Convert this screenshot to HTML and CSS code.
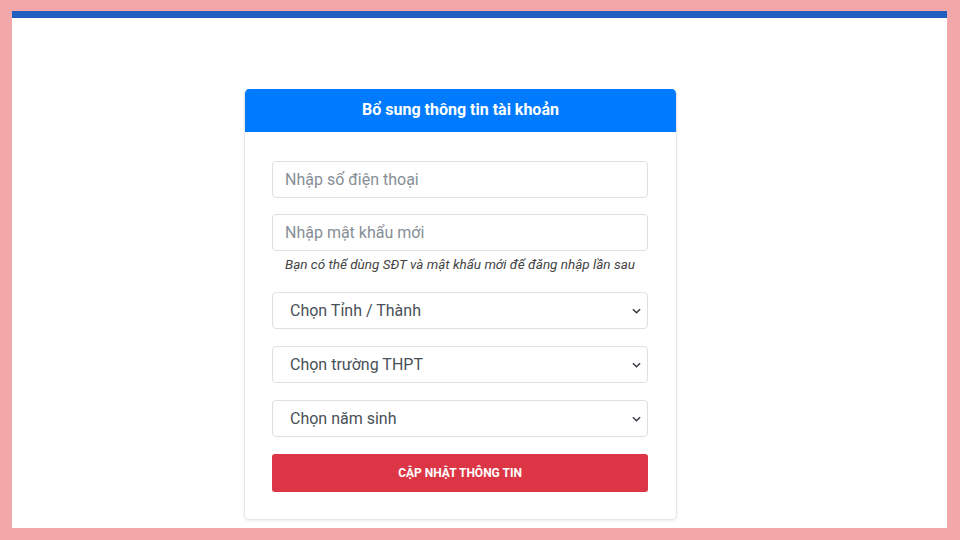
FILE: index.html
```html
<!DOCTYPE html>
<html lang="vi">
<head>
    <meta charset="UTF-8">
    <meta name="viewport" content="width=device-width, initial-scale=1.0">
    <title>Bổ sung thông tin tài khoản</title>
    <link rel="stylesheet" href="styles.css">
</head>
<body>
    <div class="frame">
        <div class="topbar"></div>

        <div class="page">
            <div class="card">
                <div class="card-header">Bổ sung thông tin tài khoản</div>

                <form class="card-body">
                    <div class="form-group">
                        <input type="text" class="form-control" placeholder="Nhập số điện thoại">
                    </div>

                    <div class="form-group">
                        <input type="password" class="form-control" placeholder="Nhập mật khẩu mới">
                        <div class="form-help">Bạn có thể dùng SĐT và mật khẩu mới để đăng nhập lần sau</div>
                    </div>

                    <div class="form-group">
                        <select class="form-select">
                            <option>Chọn Tỉnh / Thành</option>
                        </select>
                    </div>

                    <div class="form-group">
                        <select class="form-select">
                            <option>Chọn trường THPT</option>
                        </select>
                    </div>

                    <div class="form-group">
                        <select class="form-select">
                            <option>Chọn năm sinh</option>
                        </select>
                    </div>

                    <button type="button" class="btn btn-danger">Cập nhật thông tin</button>
                </form>
            </div>
        </div>
    </div>
</body>
</html>
```

FILE: styles.css
```css
html, body {
    height: 100%;
}

body {
    margin: 0;
    padding: 11px 13px 12px 12px;
    box-sizing: border-box;
    background-color: #f2a7a8;
    font-family: Roboto, 'Liberation Sans', Arial, sans-serif;
    color: #495057;
    overflow: hidden;
}

.frame {
    height: 100%;
    background-color: white;
}

.topbar {
    height: 7px;
    background-color: #1e5fbf;
}

.page {
    display: flex;
    padding: 71px 0 0 232px;
}

.card {
    width: 431px;
    background-color: white;
    border: 1px solid #e6e8eb;
    border-top: none;
    border-radius: 5px;
    box-shadow: 0 1px 3px rgba(0, 0, 0, 0.08);
    overflow: hidden;
}

.card-header {
    height: 43px;
    line-height: 42px;
    background-color: #007bff;
    color: white;
    text-align: center;
    font-size: 16px;
    font-weight: 700;
}

.card-body {
    padding: 29px 28px 27px 27px;
}

.form-group {
    margin-bottom: 16px;
}

.form-group:nth-child(n+3) {
    margin-bottom: 17px;
}

.form-control,
.form-select {
    display: block;
    width: 100%;
    height: 37px;
    box-sizing: border-box;
    border: 1px solid #dcdfe3;
    border-radius: 4px;
    background-color: white;
    font-family: inherit;
    color: #495057;
}

.form-control {
    padding: 0 12px;
    font-size: 16px;
}

.form-control::placeholder {
    color: #868e96;
}

.form-select {
    appearance: none;
    padding: 0 30px 0 17px;
    font-size: 16px;
    background-image: url("data:image/svg+xml,%3Csvg xmlns='http://www.w3.org/2000/svg' width='10' height='6' viewBox='0 0 10 6'%3E%3Cpath d='M1 1l4 4 4-4' fill='none' stroke='%23343a40' stroke-width='1.6'/%3E%3C/svg%3E");
    background-repeat: no-repeat;
    background-position: right 6px center;
    background-size: 9px 6px;
}

.form-help {
    margin-top: 5px;
    padding-bottom: 4px;
    line-height: 16px;
    font-size: 13.5px;
    font-style: italic;
    color: #444;
    text-align: center;
}

.btn {
    display: block;
    width: 100%;
    height: 38px;
    border: none;
    border-radius: 3px;
    font-family: inherit;
    font-size: 12px;
    font-weight: 700;
    text-transform: uppercase;
    cursor: pointer;
}

.btn-danger {
    background-color: #dc3545;
    color: white;
}
```
